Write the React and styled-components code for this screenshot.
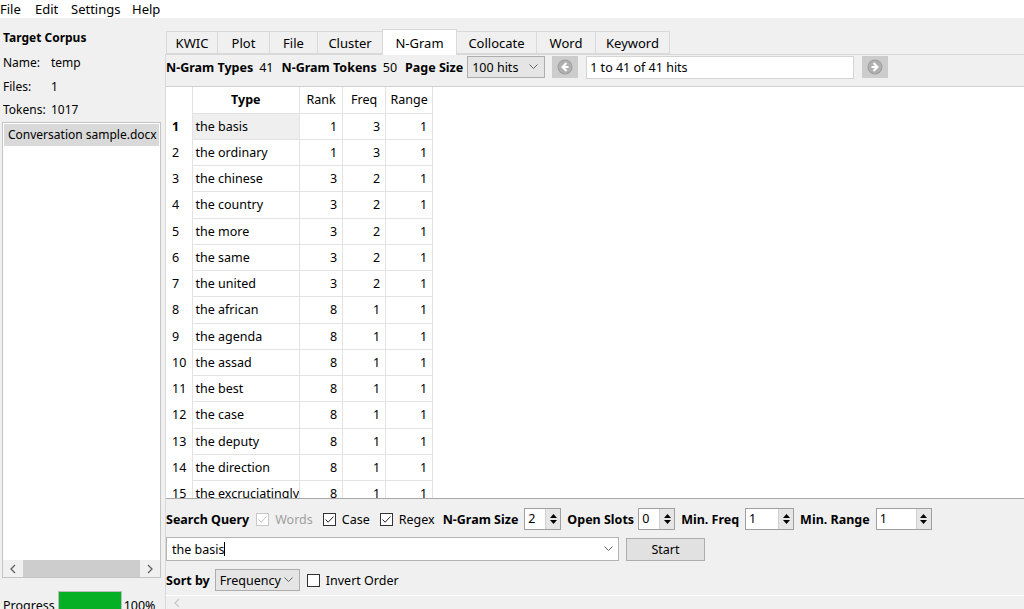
import React from 'react';
import styled, { createGlobalStyle } from 'styled-components';

const Global = createGlobalStyle`
  html, body { margin: 0; padding: 0; }
  body {
    font-family: "Noto Sans", "Open Sans", sans-serif;
    font-size: 12px;
    color: #000;
    background: #f0f0f0;
  }
  #root { width: 1024px; height: 609px; overflow: hidden; }
`;

const Window = styled.div`
  width: 1024px;
  height: 609px;
  display: flex;
  flex-direction: column;
  background: #f0f0f0;
  overflow: hidden;
`;

const MenuBar = styled.div`
  height: 18px;
  flex: none;
  background: #fff;
  display: flex;
  align-items: center;
`;

const MenuItem = styled.span`
  width: ${p => p.$w}px;
  font-size: 13px;
`;

const Main = styled.div`
  flex: 1;
  min-height: 0;
  display: flex;
`;

/* ---------- left corpus panel ---------- */
const Sidebar = styled.div`
  width: 163px;
  flex: none;
  display: flex;
  flex-direction: column;
`;

const SideTitle = styled.div`
  margin-top: 12px;
  padding-left: 3px;
  height: 16px;
  line-height: 16px;
  font-weight: 700;
`;

const InfoGrid = styled.div`
  display: grid;
  grid-template-columns: 48px 1fr;
  grid-auto-rows: 23.6px;
  align-items: center;
  padding-left: 3px;
  margin-top: 5px;
`;

const ListBox = styled.div`
  margin: 0 2px 0 2px;
  flex: 1;
  min-height: 0;
  background: #fff;
  border: 1px solid #c4c4c4;
  display: flex;
  flex-direction: column;
`;

const ListItem = styled.div`
  margin: 1px 1px 0 1px;
  height: 22px;
  line-height: 22px;
  padding-left: 4px;
  background: ${p => (p.$selected ? '#d9d9d9' : 'transparent')};
  white-space: nowrap;
  overflow: hidden;
  font-size: 12px;
`;

const ListFill = styled.div`
  flex: 1;
`;

const HScroll = styled.div`
  height: 17px;
  flex: none;
  background: #f0f0f0;
  display: flex;
  align-items: center;
`;

const ScrollArrow = styled.span`
  width: 20px;
  display: flex;
  align-items: center;
  justify-content: center;
`;

const ScrollThumb = styled.div`
  flex: 1;
  height: 17px;
  background: #cdcdcd;
`;

const ProgressRow = styled.div`
  height: 31px;
  flex: none;
  display: flex;
  align-items: flex-end;
  padding-left: 3px;
  font-size: 12.5px;
`;

const ProgressLabel = styled.span`
  line-height: 14px;
  margin-bottom: -4px;
`;

const ProgressBar = styled.div`
  width: 64px;
  height: 18px;
  margin: 0 2px 0 3px;
  box-sizing: border-box;
  border: 1px solid #bcbcbc;
  border-bottom: none;
  background: #06b025;
`;

/* ---------- right tool pane ---------- */
const Pane = styled.div`
  flex: 1;
  min-width: 0;
  display: flex;
  flex-direction: column;
  padding-top: 10px;
  margin-left: 2px;
`;

const TabBar = styled.div`
  height: 26px;
  flex: none;
  display: flex;
  align-items: flex-end;
  padding-left: 2px;
  position: relative;
  z-index: 1;
`;

const Tab = styled.div`
  width: ${p => p.$w}px;
  height: ${p => (p.$active ? 26 : 23)}px;
  margin-bottom: ${p => (p.$active ? -1 : 0)}px;
  margin-left: -1px;
  box-sizing: border-box;
  border: 1px solid #d9d9d9;
  border-bottom: ${p => (p.$active ? 'none' : '1px solid #d9d9d9')};
  background: ${p => (p.$active ? '#fff' : '#f0f0f0')};
  display: flex;
  align-items: center;
  justify-content: center;
  font-size: 13px;
`;

const TabBody = styled.div`
  flex: 1;
  min-height: 0;
  display: flex;
  flex-direction: column;
  border-top: 1px solid #d9d9d9;
  border-left: 1px solid #d9d9d9;
`;

const Toolbar = styled.div`
  height: 22px;
  margin-top: 1px;
  flex: none;
  display: flex;
  align-items: center;
  font-size: 12.5px;
`;

const Bold = styled.span`
  font-weight: 700;
  margin-right: ${p => p.$mr ?? 6}px;
  white-space: nowrap;
`;

const Value = styled.span`
  margin-right: 8px;
`;

const Select = styled.div`
  width: ${p => p.$w}px;
  height: 22px;
  box-sizing: border-box;
  background: #e5e5e5;
  border: 1px solid #adadad;
  display: flex;
  align-items: center;
  justify-content: space-between;
  padding: 0 6px 0 4px;
  font-size: 12.5px;
  flex: none;
`;

const NavButton = styled.div`
  width: 26px;
  height: 22px;
  background: #cccccc;
  display: flex;
  align-items: center;
  justify-content: center;
  margin-left: ${p => p.$ml}px;
  flex: none;
`;

const HitsField = styled.div`
  width: 268px;
  height: 23px;
  box-sizing: border-box;
  margin-left: 8px;
  background: #fff;
  border: 1px solid #d4d4d4;
  display: flex;
  align-items: center;
  padding-left: 3px;
  font-size: 12.5px;
`;

const TableWrap = styled.div`
  margin-top: 8px;
  flex: 1;
  min-height: 0;
  background: #fff;
  border-top: 1px solid #d0d0d0;
  border-bottom: 1px solid #a8a8a8;
  overflow: hidden;
`;

const Grid = styled.table`
  border-collapse: collapse;
  table-layout: fixed;
  font-size: 12.5px;
  td, th { padding: 0; overflow: hidden; white-space: nowrap; }
`;

const HeadCell = styled.th`
  width: ${p => p.$w}px;
  height: 26px;
  font-weight: ${p => (p.$bold ? 700 : 400)};
  text-align: center;
  border-right: 1px solid #e3e3e3;
  box-sizing: border-box;
`;

const RowNum = styled.td`
  height: 26.25px;
  padding-left: 6px !important;
  font-weight: ${p => (p.$bold ? 700 : 400)};
  border-right: 1px solid #e3e3e3;
`;

const Cell = styled.td`
  height: 26.25px;
  box-sizing: border-box;
  text-align: ${p => (p.$num ? 'right' : 'left')};
  padding: ${p => (p.$num ? '0 5px 0 0' : '0 0 0 3px')} !important;
  background: ${p => (p.$selected ? '#efefef' : '#fff')};
  border-right: 1px solid #e3e3e3;
  border-top: 1px solid #e3e3e3;
`;

const Controls = styled.div`
  height: 96px;
  flex: none;
  display: flex;
  flex-direction: column;
  font-size: 12.5px;
`;

const ControlRow = styled.div`
  display: flex;
  align-items: center;
  height: ${p => p.$h}px;
  margin-top: ${p => p.$mt}px;
`;

const CheckLabel = styled.label`
  display: flex;
  align-items: center;
  gap: 6px;
  margin-left: ${p => p.$ml ?? 0}px;
  margin-right: ${p => p.$mr ?? 0}px;
  color: ${p => (p.$disabled ? '#a0a0a0' : '#000')};
`;

const Box = styled.span`
  width: 13px;
  height: 13px;
  box-sizing: border-box;
  border: 1px solid ${p => (p.$disabled ? '#c8c8c8' : '#333')};
  background: #fff;
  display: flex;
  align-items: center;
  justify-content: center;
`;

const SpinBox = styled.div`
  width: ${p => p.$w}px;
  height: 22px;
  box-sizing: border-box;
  border: 1px solid #a0a0a0;
  background: #fff;
  display: flex;
  margin-right: 6px;
  flex: none;
`;

const SpinValue = styled.span`
  flex: 1;
  padding-left: 3px;
  line-height: 20px;
`;

const SpinArrows = styled.div`
  width: 14px;
  background: #e6e6e6;
  border-left: 1px solid #d0d0d0;
  display: flex;
  flex-direction: column;
  align-items: center;
  justify-content: center;
  gap: 2px;
`;

const QueryCombo = styled.div`
  width: 453px;
  height: 24px;
  box-sizing: border-box;
  background: #fff;
  border: 1px solid #b4b4b4;
  display: flex;
  align-items: center;
  justify-content: space-between;
  padding: 0 5px;
`;

const Caret = styled.span`
  display: inline-block;
  width: 1px;
  height: 14px;
  background: #000;
  vertical-align: -2px;
`;

const Button = styled.div`
  width: 79px;
  height: 23px;
  box-sizing: border-box;
  margin-left: 7px;
  background: #e1e1e1;
  border: 1px solid #adadad;
  display: flex;
  align-items: center;
  justify-content: center;
`;

const BottomScroll = styled.div`
  height: 13px;
  flex: none;
  border-top: 1px solid #fff;
  padding-left: 8px;
  display: flex;
  align-items: center;
`;

/* ---------- small drawings ---------- */
const Chevron = () => (
  <svg width="9" height="6" viewBox="0 0 9 6">
    <polyline points="0.5,0.5 4.5,4.5 8.5,0.5" fill="none" stroke="#606060" strokeWidth="1" />
  </svg>
);

const ArrowGlyph = ({ dir, color = '#606060' }) => (
  <svg width="6" height="10" viewBox="0 0 6 10">
    <polyline
      points={dir === 'left' ? '5,1 1,5 5,9' : '1,1 5,5 1,9'}
      fill="none"
      stroke={color}
      strokeWidth="1.3"
    />
  </svg>
);

const CircleArrow = ({ dir }) => (
  <svg width="16" height="16" viewBox="0 0 16 16">
    <circle cx="8" cy="8" r="7.5" fill="#9e9e9e" />
    <circle cx="8" cy="8" r="6.5" fill="#b0b0b0" />
    {dir === 'left' ? (
      <path d="M9.5 4 L5.5 8 L9.5 12 M5.5 8 H11.5" fill="none" stroke="#fff" strokeWidth="2" />
    ) : (
      <path d="M6.5 4 L10.5 8 L6.5 12 M10.5 8 H4.5" fill="none" stroke="#fff" strokeWidth="2" />
    )}
  </svg>
);

const Check = ({ disabled }) => (
  <svg width="11" height="11" viewBox="0 0 11 11">
    <polyline
      points="1.5,5.5 4.2,8.2 9.5,2.5"
      fill="none"
      stroke={disabled ? '#c0c0c0' : '#222'}
      strokeWidth="1"
    />
  </svg>
);

const SpinTriangles = () => (
  <>
    <svg width="7" height="4" viewBox="0 0 7 4"><polygon points="0,4 3.5,0 7,4" fill="#000" /></svg>
    <svg width="7" height="4" viewBox="0 0 7 4"><polygon points="0,0 3.5,4 7,0" fill="#000" /></svg>
  </>
);

const Checkbox = ({ label, checked, disabled, ml, mr }) => (
  <CheckLabel $disabled={disabled} $ml={ml} $mr={mr}>
    <Box $disabled={disabled}>{checked && <Check disabled={disabled} />}</Box>
    {label}
  </CheckLabel>
);

const Spinner = ({ value, w }) => (
  <SpinBox $w={w}>
    <SpinValue>{value}</SpinValue>
    <SpinArrows><SpinTriangles /></SpinArrows>
  </SpinBox>
);

const tabs = [
  ['KWIC', 52], ['Plot', 53], ['File', 49], ['Cluster', 66],
  ['N-Gram', 75], ['Collocate', 81], ['Word', 60], ['Keyword', 75],
];

const rows = [
  ['the basis', 1, 3, 1], ['the ordinary', 1, 3, 1], ['the chinese', 3, 2, 1],
  ['the country', 3, 2, 1], ['the more', 3, 2, 1], ['the same', 3, 2, 1],
  ['the united', 3, 2, 1], ['the african', 8, 1, 1], ['the agenda', 8, 1, 1],
  ['the assad', 8, 1, 1], ['the best', 8, 1, 1], ['the case', 8, 1, 1],
  ['the deputy', 8, 1, 1], ['the direction', 8, 1, 1], ['the excruciatingly', 8, 1, 1],
  ['the first', 8, 1, 1],
];

export default function App() {
  return (
    <Window>
      <Global />
      <MenuBar>
        <MenuItem $w={35}>File</MenuItem>
        <MenuItem $w={36}>Edit</MenuItem>
        <MenuItem $w={61}>Settings</MenuItem>
        <MenuItem $w={40}>Help</MenuItem>
      </MenuBar>
      <Main>
        <Sidebar>
          <SideTitle>Target Corpus</SideTitle>
          <InfoGrid>
            <span>Name:</span><span>temp</span>
            <span>Files:</span><span>1</span>
            <span>Tokens:</span><span>1017</span>
          </InfoGrid>
          <ListBox>
            <ListItem $selected>Conversation sample.docx</ListItem>
            <ListFill />
            <HScroll>
              <ScrollArrow><ArrowGlyph dir="left" /></ScrollArrow>
              <ScrollThumb />
              <ScrollArrow><ArrowGlyph dir="right" /></ScrollArrow>
            </HScroll>
          </ListBox>
          <ProgressRow>
            <ProgressLabel>Progress</ProgressLabel>
            <ProgressBar />
            <ProgressLabel>100%</ProgressLabel>
          </ProgressRow>
        </Sidebar>

        <Pane>
          <TabBar>
            {tabs.map(([name, w]) => (
              <Tab key={name} $w={w} $active={name === 'N-Gram'}>{name}</Tab>
            ))}
          </TabBar>
          <TabBody>
            <Toolbar>
              <Bold>N-Gram Types</Bold><Value>41</Value>
              <Bold>N-Gram Tokens</Bold><Value>50</Value>
              <Bold $mr={4}>Page Size</Bold>
              <Select $w={78}><span>100 hits</span><Chevron /></Select>
              <NavButton $ml={7}><CircleArrow dir="left" /></NavButton>
              <HitsField>1 to 41 of 41 hits</HitsField>
              <NavButton $ml={8}><CircleArrow dir="right" /></NavButton>
            </Toolbar>

            <TableWrap>
              <Grid>
                <thead>
                  <tr>
                    <HeadCell $w={26} />
                    <HeadCell $w={107} $bold>Type</HeadCell>
                    <HeadCell $w={43}>Rank</HeadCell>
                    <HeadCell $w={43}>Freq</HeadCell>
                    <HeadCell $w={47}>Range</HeadCell>
                  </tr>
                </thead>
                <tbody>
                  {rows.map(([type, rank, freq, range], i) => (
                    <tr key={type}>
                      <RowNum $bold={i === 0}>{i + 1}</RowNum>
                      <Cell $selected={i === 0}>{type}</Cell>
                      <Cell $num>{rank}</Cell>
                      <Cell $num>{freq}</Cell>
                      <Cell $num>{range}</Cell>
                    </tr>
                  ))}
                </tbody>
              </Grid>
            </TableWrap>

            <Controls>
              <ControlRow $h={22} $mt={9}>
                <Bold $mr={7}>Search Query</Bold>
                <Checkbox label="Words" checked disabled mr={10} />
                <Checkbox label="Case" checked mr={10} />
                <Checkbox label="Regex" checked mr={8} />
                <Bold>N-Gram Size</Bold>
                <Spinner value="2" w={37} />
                <Bold $mr={4}>Open Slots</Bold>
                <Spinner value="0" w={37} />
                <Bold>Min. Freq</Bold>
                <Spinner value="1" w={49} />
                <Bold>Min. Range</Bold>
                <Spinner value="1" w={56} />
              </ControlRow>
              <ControlRow $h={24} $mt={7}>
                <QueryCombo>
                  <span>the basis<Caret /></span>
                  <Chevron />
                </QueryCombo>
                <Button>Start</Button>
              </ControlRow>
              <ControlRow $h={22} $mt={8}>
                <Bold $mr={5}>Sort by</Bold>
                <Select $w={85}><span>Frequency</span><Chevron /></Select>
                <Checkbox label="Invert Order" ml={7} />
              </ControlRow>
            </Controls>
            <BottomScroll><ArrowGlyph dir="left" color="#c8c8c8" /></BottomScroll>
          </TabBody>
        </Pane>
      </Main>
    </Window>
  );
}
